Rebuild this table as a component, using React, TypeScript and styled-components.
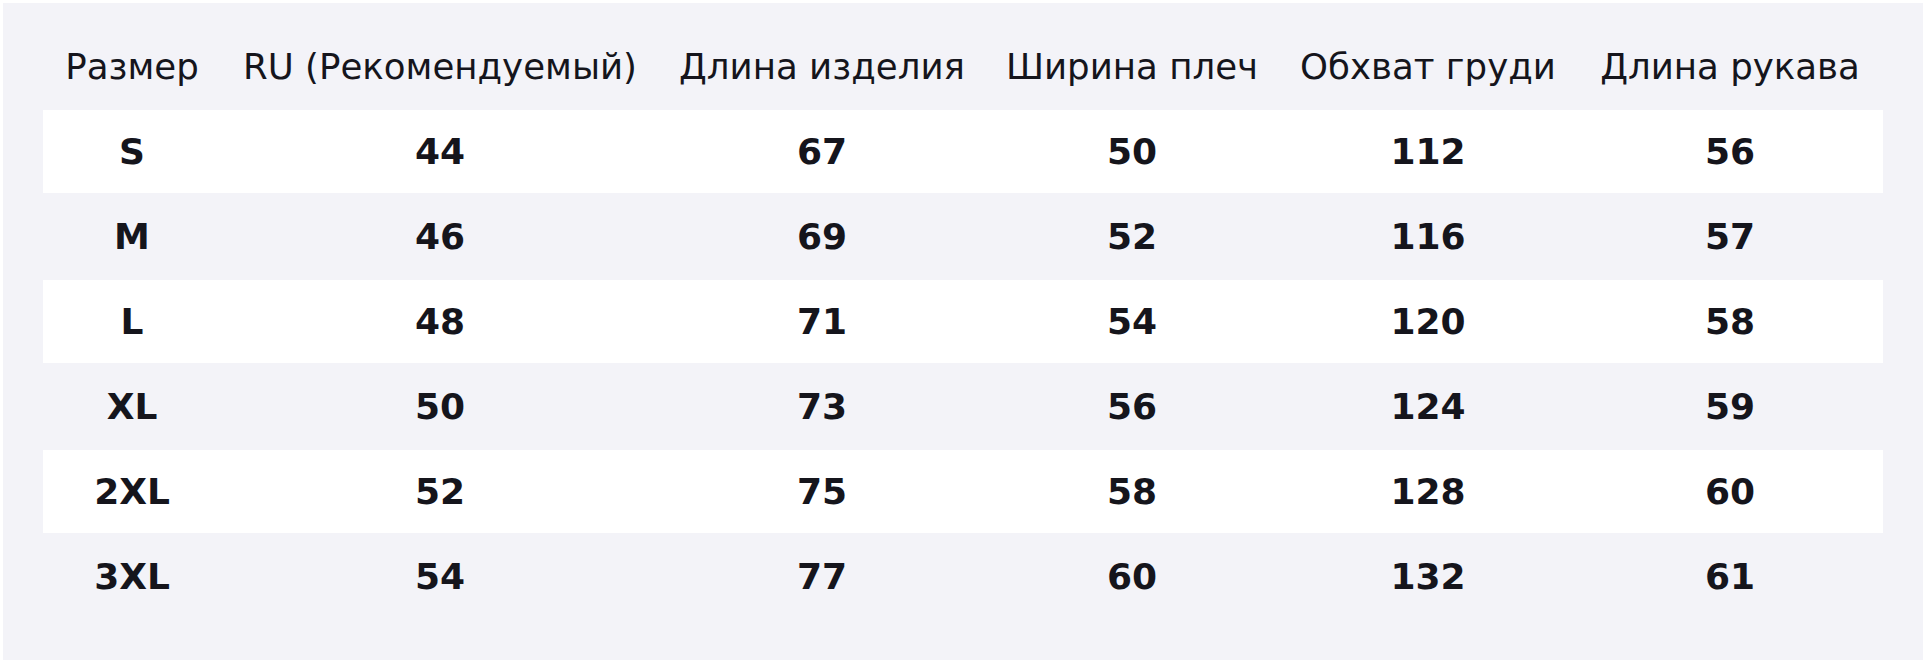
import React from "react";
import styled, { createGlobalStyle } from "styled-components";

const GlobalStyle = createGlobalStyle`
  html, body {
    margin: 0;
    padding: 0;
    background: #ffffff;
  }
  body {
    font-family: "DejaVu Sans", "Liberation Sans", sans-serif;
    color: #15151c;
  }
`;

const Page = styled.div`
  padding: 3px;
`;

const Panel = styled.section`
  background: #f3f3f8;
  padding: 20px 40px 40px;
`;

const Table = styled.table`
  width: 100%;
  border-collapse: separate;
  border-spacing: 0 2px;
  table-layout: fixed;
`;

const Col = styled.col<{ $width: number }>`
  width: ${(p) => p.$width}px;
`;

const HeadCell = styled.th`
  height: 83px;
  padding: 0;
  font-size: 35.6px;
  font-weight: 400;
  text-align: center;
  white-space: nowrap;
  color: #15151c;
  vertical-align: middle;
`;

const Row = styled.tr<{ $striped: boolean }>`
  background: ${(p) => (p.$striped ? "#ffffff" : "transparent")};
`;

const Cell = styled.td`
  height: 83px;
  padding: 0;
  font-size: 36px;
  font-weight: 700;
  text-align: center;
  white-space: nowrap;
  color: #15151c;
  vertical-align: middle;
`;

const columns = [
  { title: "Размер", width: 178 },
  { title: "RU (Рекомендуемый)", width: 438 },
  { title: "Длина изделия", width: 326 },
  { title: "Ширина плеч", width: 294 },
  { title: "Обхват груди", width: 298 },
  { title: "Длина рукава", width: 306 },
];

const rows: string[][] = [
  ["S", "44", "67", "50", "112", "56"],
  ["M", "46", "69", "52", "116", "57"],
  ["L", "48", "71", "54", "120", "58"],
  ["XL", "50", "73", "56", "124", "59"],
  ["2XL", "52", "75", "58", "128", "60"],
  ["3XL", "54", "77", "60", "132", "61"],
];

export default function App() {
  return (
    <>
      <GlobalStyle />
      <Page>
        <Panel>
          <Table>
            <colgroup>
              {columns.map((c) => (
                <Col key={c.title} $width={c.width} />
              ))}
            </colgroup>
            <thead>
              <tr>
                {columns.map((c) => (
                  <HeadCell key={c.title}>{c.title}</HeadCell>
                ))}
              </tr>
            </thead>
            <tbody>
              {rows.map((r, i) => (
                <Row key={r[0]} $striped={i % 2 === 0}>
                  {r.map((c, j) => (
                    <Cell key={j}>{c}</Cell>
                  ))}
                </Row>
              ))}
            </tbody>
          </Table>
        </Panel>
      </Page>
    </>
  );
}
